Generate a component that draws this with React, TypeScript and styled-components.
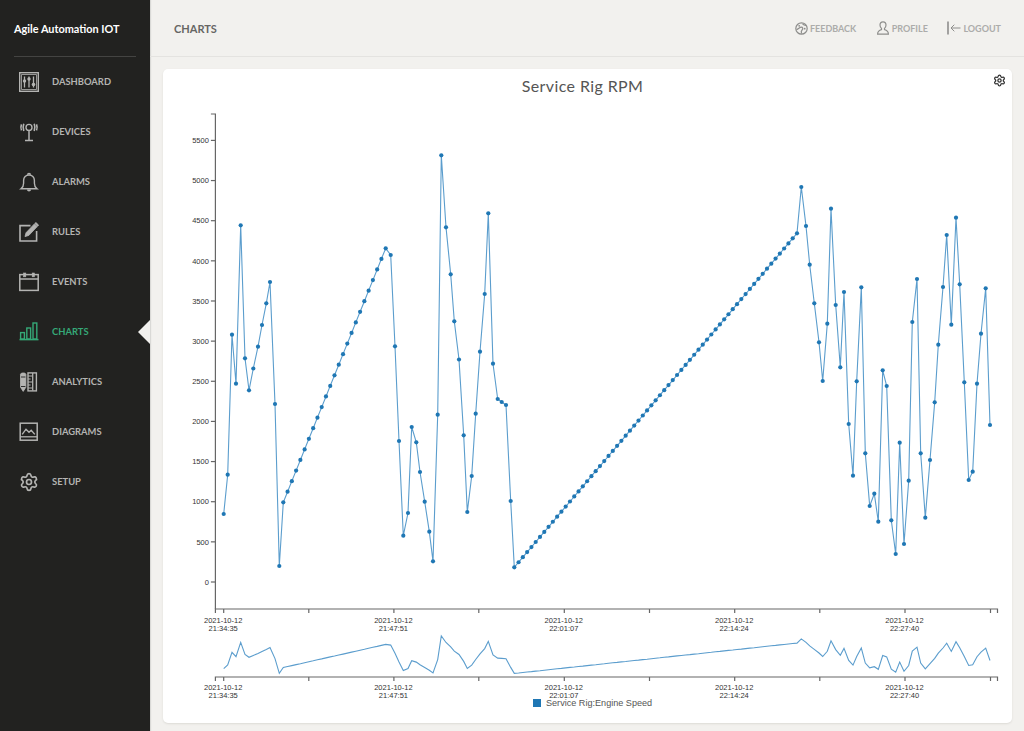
import React from 'react'
import styled, { createGlobalStyle } from 'styled-components'
import { Settings } from 'lucide-react'

type Point = [number, number]

const NAV_ICON_SIZE = 20

const DashboardIcon = () => (
  <svg width={NAV_ICON_SIZE} height={NAV_ICON_SIZE} viewBox="0 0 20 20" fill="none" stroke="currentColor">
    <rect x="0.7" y="0.7" width="18.6" height="18.6" strokeWidth="1.4" />
    <rect x="2.6" y="2.6" width="14.8" height="14.8" strokeWidth="0.8" />
    <path d="M5.5 4.5v11M10 4.5v11M14.5 4.5v11" strokeWidth="1.3" />
    <circle cx="5.5" cy="9" r="1.7" fill="currentColor" stroke="none" />
    <circle cx="10" cy="7" r="1.7" fill="currentColor" stroke="none" />
    <circle cx="14.5" cy="12.5" r="1.8" fill="currentColor" stroke="none" />
  </svg>
)

const DevicesIcon = () => (
  <svg width={NAV_ICON_SIZE} height={NAV_ICON_SIZE} viewBox="0 0 20 20" fill="none" stroke="currentColor">
    <circle cx="10" cy="5.4" r="3" strokeWidth="1.4" />
    <path d="M10 8.4v9.8M6 18.4h8" strokeWidth="1.5" />
    <path d="M4.8 1.8c-.9 2.3-.9 5 0 7.2M15.2 1.8c.9 2.3 .9 5 0 7.2" strokeWidth="1.6" />
    <path d="M2.5 2.4c-.8 2-.8 4.2 0 6M17.5 2.4c.8 2 .8 4.2 0 6" strokeWidth="1.6" />
  </svg>
)

const AlarmsIcon = () => (
  <svg width={NAV_ICON_SIZE} height={NAV_ICON_SIZE} viewBox="0 0 20 20" fill="none" stroke="currentColor" strokeWidth="1.4">
    <path d="M2 16.8h16c-1.8-1.4-2.6-3-2.6-5.6V8.4c0-3-2.3-5.4-5.4-5.4S4.6 5.4 4.6 8.4v2.8c0 2.6-.8 4.2-2.6 5.6z" />
    <path d="M8.6 2.8c0-1.8 2.8-1.8 2.8 0" />
    <path d="M8.6 17.6c.4 1.3 2.4 1.3 2.8 0" strokeWidth="1.6" />
  </svg>
)

const RulesIcon = () => (
  <svg width={NAV_ICON_SIZE} height={NAV_ICON_SIZE} viewBox="0 0 20 20" fill="none" stroke="currentColor">
    <path d="M11.5 3.6H1v15.4h16.6V9" strokeWidth="1.6" />
    <path d="M6 14.6l1-3.8 8.4-8.9 2.8 2.7-8.4 8.8z" fill="currentColor" strokeWidth="0.8" />
    <path d="M15.8 1.5l1.1-1 2.7 2.6-1 1.1z" fill="currentColor" strokeWidth="0.8" />
  </svg>
)

const EventsIcon = () => (
  <svg width={NAV_ICON_SIZE} height={NAV_ICON_SIZE} viewBox="0 0 20 20" fill="none" stroke="currentColor" strokeWidth="1.5">
    <rect x="0.8" y="2.6" width="18.4" height="15.8" />
    <path d="M0.8 7h18.4" strokeWidth="1.5" />
    <rect x="4.6" y="1" width="2.2" height="3.8" fill="currentColor" strokeWidth="0.6" />
    <rect x="13.2" y="1" width="2.2" height="3.8" fill="currentColor" strokeWidth="0.6" />
  </svg>
)

const ChartsIcon = () => (
  <svg width={NAV_ICON_SIZE} height={NAV_ICON_SIZE} viewBox="0 0 20 20" fill="none" stroke="currentColor" strokeWidth="1.4">
    <path d="M0.5 17.6h19" strokeWidth="1.5" />
    <rect x="1.6" y="10.6" width="3.8" height="6.4" />
    <rect x="7.8" y="6" width="3.8" height="11" />
    <rect x="14" y="1" width="3.8" height="16" />
  </svg>
)

const AnalyticsIcon = () => (
  <svg width={NAV_ICON_SIZE} height={NAV_ICON_SIZE} viewBox="0 0 20 20" fill="none" stroke="currentColor">
    <path d="M1.5 2.2c0-1.7 5.4-1.7 5.4 0v13l-2.7 4.2-2.7-4.2z" fill="currentColor" strokeWidth="0.8" />
    <path d="M2 5h4.4M2 14.5h4.4" stroke="#222" strokeWidth="0.9" />
    <rect x="9" y="0.9" width="8.4" height="18" strokeWidth="1.4" />
    <path d="M9 4h4M9 7h2.6M9 10h4M9 13h2.6M9 16h4" strokeWidth="1.1" />
    <path d="M13.7 1v17.6" strokeWidth="1.3" />
  </svg>
)

const DiagramsIcon = () => (
  <svg width={NAV_ICON_SIZE} height={NAV_ICON_SIZE} viewBox="0 0 20 20" fill="none" stroke="currentColor" strokeWidth="1.3">
    <rect x="1.2" y="1.2" width="17" height="17" strokeWidth="1.5" />
    <path d="M1.2 14.8h17" />
    <path d="M3.2 12.4l3.8-5.2 3 3 2.2-2 3.6 4.2" strokeWidth="1.4" />
  </svg>
)

const FeedbackIcon = () => (
  <svg width="13" height="13" viewBox="0 0 13 13" fill="none" stroke="currentColor" strokeWidth="1.2">
    <circle cx="6.5" cy="6.5" r="5.7" />
    <path d="M1.5 7.6c2.2-.6 3-2.4 4.8-2.4 1.5 0 2 1.6 .9 2.5-1 .9-1.2 2.4-.6 3.9" />
    <path d="M7.5 1.8c.8 .8 2.2 1.5 3.5 1.7" />
    <circle cx="4.2" cy="3.8" r="0.9" fill="currentColor" stroke="none" />
    <circle cx="9.7" cy="6.7" r="0.9" fill="currentColor" stroke="none" />
  </svg>
)

const ProfileIcon = () => (
  <svg width="14" height="14" viewBox="0 0 14 14" fill="none" stroke="currentColor" strokeWidth="1.2">
    <path d="M7 .8c1.900 0 3 1.400 3 3.200 0 1.400-.7 2.700-1.500 3.400v1.200c1.500 .6 3.900 1 3.900 4.600H1.600c0-3.600 2.400-4 3.900-4.600V7.400C4.700 6.700 4 5.400 4 4c0-1.800 1.100-3.200 3-3.200z" />
  </svg>
)

const LogoutIcon = () => (
  <svg width="14" height="14" viewBox="0 0 14 14" fill="none" stroke="currentColor">
    <path d="M1 .5v13" strokeWidth="1.6" />
    <path d="M4 7h9.5M7.3 3.7L4 7l3.300 3.300" strokeWidth="1" />
  </svg>
)

const NAV_ITEMS = [
  { label: 'DASHBOARD', icon: <DashboardIcon /> },
  { label: 'DEVICES', icon: <DevicesIcon /> },
  { label: 'ALARMS', icon: <AlarmsIcon /> },
  { label: 'RULES', icon: <RulesIcon /> },
  { label: 'EVENTS', icon: <EventsIcon /> },
  { label: 'CHARTS', icon: <ChartsIcon />, active: true },
  { label: 'ANALYTICS', icon: <AnalyticsIcon /> },
  { label: 'DIAGRAMS', icon: <DiagramsIcon /> },
  { label: 'SETUP', icon: <Settings size={22} strokeWidth={2} /> },
]

const HEADER_LINKS = [
  { label: 'FEEDBACK', icon: <FeedbackIcon /> },
  { label: 'PROFILE', icon: <ProfileIcon /> },
  { label: 'LOGOUT', icon: <LogoutIcon /> },
]

// straight stretches of the trace, where the counter climbs at a steady rate
const ramp = ([x0, y0]: Point, [x1, y1]: Point, steps: number): Point[] =>
  Array.from({ length: steps + 1 }, (_, i): Point => [
    x0 + ((x1 - x0) * i) / steps,
    y0 + ((y1 - y0) * i) / steps,
  ])

// page coordinates of the samples
const SAMPLES: Point[] = [
  [223.7, 514], [227.7, 474.7], [232, 334.7], [236, 383.7], [240.7, 225.3], [245, 358.3],
  [249, 390.3], [253.3, 368.5], [258, 346.7], [262, 325], [266.3, 303.3], [270, 282],
  [275, 404], [279.3, 566],
  ...ramp([283.3, 502.3], [385.7, 248.3], 24),
  [390.7, 255], [395, 346.3], [399, 441], [403.3, 535.7], [408, 513], [411.7, 427],
  [416.3, 442.3], [420, 472], [424.7, 501.7], [429.3, 531.7], [433, 561.3], [437.7, 414.7],
  [441.3, 155.3], [446, 227.3], [450.7, 274.3], [454.3, 321.3], [459, 359.5], [463.7, 435.3],
  [467.3, 512], [471.7, 476], [475.7, 413.7], [480, 351.7], [484.7, 294], [488.3, 213.3],
  [493, 363.7], [497.7, 399], [501.7, 402], [506, 405], [510.7, 501],
  ...ramp([514.3, 567.3], [797, 233.3], 66),
  [801.3, 187], [806, 226], [809.7, 264.7], [814.3, 303.3], [819, 342.3], [822.7, 381],
  [827.3, 323.7], [831, 208.7], [835.7, 305], [840.3, 367.3], [844, 292], [848.7, 424],
  [853, 475.7], [856.7, 381.3], [861.3, 287.3], [865.3, 453.3], [869.7, 506], [874.3, 493.7],
  [878.3, 521.7], [882.7, 370.3], [886.7, 386], [891.3, 520.3], [895.7, 554], [899.7, 442.7],
  [904, 544], [908.7, 480.7], [912.3, 322], [917, 279], [920.7, 453.3], [925.3, 517.7],
  [930, 460], [934.7, 402.3], [938.3, 344.7], [943, 287], [946.7, 235], [951.3, 324.7],
  [956, 217.7], [959.7, 284.3], [964.3, 382.3], [968.7, 480], [972.7, 471.7], [977, 383.7],
  [981, 333.7], [985.7, 288.3], [990, 425],
]

const OVERVIEW: Point[] = SAMPLES.map(([x, y]) => [x, 621.9 + y * 0.0908])

const toPath = (points: Point[]) =>
  points.map(([x, y], i) => `${i ? 'L' : 'M'}${x.toFixed(1)} ${y.toFixed(1)}`).join('')

const Y_TICKS = [0, 500, 1000, 1500, 2000, 2500, 3000, 3500, 4000, 4500, 5000, 5500]
const X_LABELS = [
  { x: 223.7, time: '21:34:35' },
  { x: 393.9, time: '21:47:51' },
  { x: 564.3, time: '22:01:07' },
  { x: 734.7, time: '22:14:24' },
  { x: 905, time: '22:27:40' },
]
const X_MINOR = [308.8, 478.8, 649.5, 819.8, 990.5]
const AXIS_LEFT = 215.4
const AXIS_RIGHT = 997.5

const valueToY = (v: number) => 582 - v * 0.08029

function TimeAxis({ y, labelY }: { y: number; labelY: number }) {
  return (
    <g>
      <AxisLine d={`M${AXIS_LEFT} ${y + 4}V${y}H${AXIS_RIGHT}V${y + 4}`} />
      {X_MINOR.map((x) => (
        <AxisLine key={x} d={`M${x} ${y}v4`} />
      ))}
      {X_LABELS.map(({ x, time }) => (
        <g key={x}>
          <AxisLine d={`M${x} ${y}v4`} />
          <AxisText x={x - 0.5} y={labelY} textAnchor="middle">
            2021-10-12
          </AxisText>
          <AxisText x={x - 0.5} y={labelY + 8.8} textAnchor="middle">
            {time}
          </AxisText>
        </g>
      ))}
    </g>
  )
}

export default function App() {
  return (
    <Page>
      <GlobalStyle />
      <Sidebar>
        <Brand>Agile Automation IOT</Brand>
        <Nav>
          {NAV_ITEMS.map(({ label, icon, active }) => (
            <NavItem key={label} $active={active}>
              <NavIcon>{icon}</NavIcon>
              <NavLabel>{label}</NavLabel>
            </NavItem>
          ))}
        </Nav>
      </Sidebar>
      <Main>
        <Header>
          <PageTitle>CHARTS</PageTitle>
          <HeaderLinks>
            {HEADER_LINKS.map(({ label, icon }) => (
              <HeaderLink key={label}>
                {icon}
                {label}
              </HeaderLink>
            ))}
          </HeaderLinks>
        </Header>
        <Card>
          <CardTitle>Service Rig RPM</CardTitle>
          <GearButton>
            <Settings size={13} strokeWidth={2.4} />
          </GearButton>
          <ChartSvg viewBox="163 103 849 620">
            <AxisLine d={`M${AXIS_LEFT - 4.5} 114H${AXIS_LEFT}V609`} />
            {Y_TICKS.map((v) => (
              <g key={v}>
                <AxisLine d={`M${AXIS_LEFT - 4.5} ${valueToY(v)}H${AXIS_LEFT}`} />
                <AxisText x={AXIS_LEFT - 6.5} y={valueToY(v) + 2.7} textAnchor="end">
                  {v}
                </AxisText>
              </g>
            ))}
            <Trace d={toPath(SAMPLES)} />
            {SAMPLES.map(([x, y]) => (
              <SampleDot key={x} cx={x} cy={y} r={2.1} />
            ))}
            <TimeAxis y={609} labelY={622.5} />
            <Trace d={toPath(OVERVIEW)} />
            <TimeAxis y={677} labelY={689.5} />
          </ChartSvg>
          <Legend>
            <LegendSwatch />
            Service Rig:Engine Speed
          </Legend>
        </Card>
      </Main>
    </Page>
  )
}

// ========== Styled Components ==========

const GlobalStyle = createGlobalStyle`
  html, body {
    margin: 0;
    padding: 0;
    height: 100%;
    overflow: hidden;
    background: #f2f1ee;
  }
  #root {
    height: 100%;
  }
`

const Page = styled.div`
  display: flex;
  height: 731px;
  font-family: Lato, 'Noto Sans', sans-serif;
`

const Sidebar = styled.aside`
  flex: 0 0 150px;
  background: #222220;
  box-shadow: 1px 0 1px #d9d9d6;
`

const Brand = styled.div`
  display: flex;
  align-items: center;
  height: 56px;
  margin: 0 14px;
  border-bottom: 1px solid #444442;
  color: #ffffff;
  font-size: 10.9px;
  font-weight: 700;
`

const Nav = styled.nav`
  display: flex;
  flex-direction: column;
`

const NavItem = styled.div<{ $active?: boolean }>`
  position: relative;
  display: flex;
  align-items: center;
  gap: 13px;
  height: 50px;
  padding-left: 19px;
  color: ${({ $active }) => ($active ? '#35a877' : '#b4b4b2')};
  font-size: 9.4px;
  font-weight: 700;

  ${({ $active }) =>
    $active &&
    `
    &::after {
      content: '';
      position: absolute;
      right: 0;
      top: 13px;
      border-style: solid;
      border-width: 12px 12px 12px 0;
      border-color: transparent #f2f1ee transparent transparent;
    }
  `}
`

const NavIcon = styled.span`
  display: flex;
  align-items: center;
  justify-content: center;
  width: 20px;
  height: 20px;
`

const NavLabel = styled.span`
  margin-bottom: 1px;
`

const Main = styled.main`
  flex: 1;
  display: flex;
  flex-direction: column;
  min-width: 0;
`

const Header = styled.header`
  flex: 0 0 56px;
  display: flex;
  align-items: center;
  justify-content: space-between;
  padding: 0 23px 0 24px;
  border-bottom: 1px solid #e4e3e0;
`

const PageTitle = styled.div`
  color: #666664;
  font-size: 11px;
  font-weight: 700;
`

const HeaderLinks = styled.div`
  display: flex;
  align-items: center;
  gap: 19.5px;
`

const HeaderLink = styled.div`
  display: flex;
  align-items: center;
  gap: 2px;
  color: #acacaa;
  font-size: 9px;
  font-weight: 700;

  svg {
    color: #8e8e8c;
  }
`

const Card = styled.section`
  position: relative;
  display: flex;
  flex-direction: column;
  height: 654px;
  margin: 12px 12px 8px 13px;
  background: #ffffff;
  border-radius: 5px;
  box-shadow: 0 1px 2px #dcdbd6;
`

const CardTitle = styled.h2`
  flex: 0 0 34px;
  margin: 0;
  padding-right: 10px;
  color: #555555;
  font-size: 16px;
  font-weight: 400;
  line-height: 34px;
  text-align: center;
  letter-spacing: 0.4px;
`

const GearButton = styled.div`
  position: absolute;
  top: 5px;
  right: 6px;
  display: flex;
  color: #333333;
`

const ChartSvg = styled.svg`
  display: block;
  width: 849px;
  height: 620px;
`

const AxisLine = styled.path`
  fill: none;
  stroke: #666666;
  stroke-width: 1.2;
`

const AxisText = styled.text`
  fill: #333333;
  font-family: 'Liberation Sans', Arial, sans-serif;
  font-size: 7.5px;
`

const Trace = styled.path`
  fill: none;
  stroke: #5b9dcd;
  stroke-width: 1.1;
`

const SampleDot = styled.circle`
  fill: #1f77b4;
`

const Legend = styled.div`
  position: absolute;
  left: 370px;
  top: 630px;
  display: flex;
  align-items: center;
  gap: 5px;
  color: #555555;
  font-family: 'Liberation Sans', Arial, sans-serif;
  font-size: 9.1px;
  line-height: 8px;
`

const LegendSwatch = styled.span`
  width: 8px;
  height: 8px;
  background: #1f77b4;
`
